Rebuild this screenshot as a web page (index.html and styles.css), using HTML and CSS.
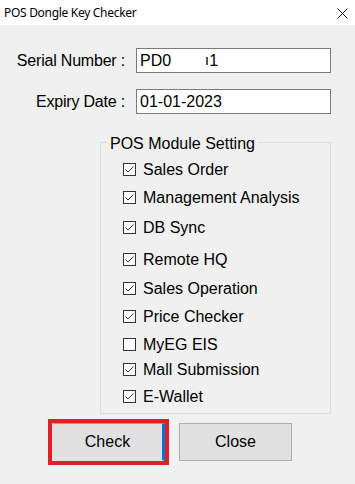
FILE: index.html
```html
<!DOCTYPE html>
<html>
<head>
<meta charset="utf-8">
<link rel="stylesheet" href="styles.css">
</head>
<body>
<div class="window">
  <div class="titlebar">
    <span class="title">POS Dongle Key Checker</span>
    <svg class="close-x" width="11" height="11" viewBox="0 0 11 11"><path d="M0.5 0.5 L10.5 10.5 M10.5 0.5 L0.5 10.5" stroke="#111" stroke-width="1" fill="none"/></svg>
  </div>
  <div class="form">
    <div class="label">Serial Number :</div>
    <div class="field">PD0<span class="gap"></span><span class="remnant"></span>1</div>
    <div class="label">Expiry Date :</div>
    <div class="field">01-01-2023</div>
  </div>
  <fieldset class="group">
    <legend class="legend">POS Module Setting</legend>
    <div class="list">
      <div class="item"><svg class="cb" width="13" height="13" viewBox="0 0 13 13"><rect x="0.5" y="0.5" width="12" height="12" fill="#fff" stroke="#333"/><polyline points="2.5,6.5 5,9 10.5,3.5" fill="none" stroke="#333" stroke-width="1"/></svg><span>Sales Order</span></div>
      <div class="item sp3"><svg class="cb" width="13" height="13" viewBox="0 0 13 13"><rect x="0.5" y="0.5" width="12" height="12" fill="#fff" stroke="#333"/><polyline points="2.5,6.5 5,9 10.5,3.5" fill="none" stroke="#333" stroke-width="1"/></svg><span>Management Analysis</span></div>
      <div class="item sp5"><svg class="cb" width="13" height="13" viewBox="0 0 13 13"><rect x="0.5" y="0.5" width="12" height="12" fill="#fff" stroke="#333"/><polyline points="2.5,6.5 5,9 10.5,3.5" fill="none" stroke="#333" stroke-width="1"/></svg><span>DB Sync</span></div>
      <div class="item sp7"><svg class="cb" width="13" height="13" viewBox="0 0 13 13"><rect x="0.5" y="0.5" width="12" height="12" fill="#fff" stroke="#333"/><polyline points="2.5,6.5 5,9 10.5,3.5" fill="none" stroke="#333" stroke-width="1"/></svg><span>Remote HQ</span></div>
      <div class="item sp4"><svg class="cb" width="13" height="13" viewBox="0 0 13 13"><rect x="0.5" y="0.5" width="12" height="12" fill="#fff" stroke="#333"/><polyline points="2.5,6.5 5,9 10.5,3.5" fill="none" stroke="#333" stroke-width="1"/></svg><span>Sales Operation</span></div>
      <div class="item sp3"><svg class="cb" width="13" height="13" viewBox="0 0 13 13"><rect x="0.5" y="0.5" width="12" height="12" fill="#fff" stroke="#333"/><polyline points="2.5,6.5 5,9 10.5,3.5" fill="none" stroke="#333" stroke-width="1"/></svg><span>Price Checker</span></div>
      <div class="item sp3"><svg class="cb" width="13" height="13" viewBox="0 0 13 13"><rect x="0.5" y="0.5" width="12" height="12" fill="#fff" stroke="#333"/></svg><span>MyEG EIS</span></div>
      <div class="item sp0"><svg class="cb" width="13" height="13" viewBox="0 0 13 13"><rect x="0.5" y="0.5" width="12" height="12" fill="#fff" stroke="#333"/><polyline points="2.5,6.5 5,9 10.5,3.5" fill="none" stroke="#333" stroke-width="1"/></svg><span>Mall Submission</span></div>
      <div class="item sp2"><svg class="cb" width="13" height="13" viewBox="0 0 13 13"><rect x="0.5" y="0.5" width="12" height="12" fill="#fff" stroke="#333"/><polyline points="2.5,6.5 5,9 10.5,3.5" fill="none" stroke="#333" stroke-width="1"/></svg><span>E-Wallet</span></div>
    </div>
  </fieldset>
  <div class="buttons">
    <div class="btn btn-default">Check</div>
    <div class="btn">Close</div>
  </div>
</div>
</body>
</html>
```
FILE: styles.css
```css
html, body {
  margin: 0;
  padding: 0;
  background: #f0f0f0;
}
.window {
  width: 355px;
  height: 484px;
  overflow: hidden;
  background: #f0f0f0;
  font-family: "Liberation Sans", Arial, sans-serif;
  font-size: 16px;
  color: #000;
}
.titlebar {
  height: 25px;
  background: #fff;
  display: flex;
  align-items: center;
  justify-content: space-between;
  padding: 0 7px 0 4px;
  box-sizing: border-box;
}
.title {
  font-family: "Noto Sans", "Open Sans", sans-serif;
  font-size: 12px;
  letter-spacing: -0.3px;
  color: #000;
}
.close-x {
  display: block;
  margin-top: 2px;
}
.form {
  display: grid;
  grid-template-columns: 125px 195px;
  column-gap: 11px;
  row-gap: 16px;
  padding-top: 23px;
}
.label {
  text-align: right;
  height: 25px;
  line-height: 25px;
  white-space: nowrap;
  letter-spacing: -0.2px;
}
.field {
  height: 25px;
  line-height: 23px;
  box-sizing: border-box;
  border: 1px solid #7a7a7a;
  background: #fff;
  padding: 0 3px;
  white-space: nowrap;
}
.gap {
  display: inline-block;
  width: 35px;
}
.remnant {
  display: inline-block;
  width: 2px;
  height: 8px;
  background: #555;
  margin-right: 1px;
  vertical-align: 1px;
}
.group {
  margin: 17px 0 0 100px;
  width: 231px;
  box-sizing: border-box;
  border: 1px solid #dcdcdc;
  padding: 0;
  min-width: 0;
}
.legend {
  margin-left: 6px;
  padding: 4px 3px 0 3px;
  line-height: 18px;
}
.list {
  padding: 4px 0 4px 22px;
}
.item {
  height: 25px;
  display: flex;
  align-items: center;
  white-space: nowrap;
}
.sp0 { margin-top: 0; }
.sp2 { margin-top: 2px; }
.sp3 { margin-top: 3px; }
.sp4 { margin-top: 4px; }
.sp5 { margin-top: 5px; }
.sp7 { margin-top: 7px; }
.cb {
  display: block;
  flex: none;
  margin-right: 7px;
}
.buttons {
  display: flex;
  gap: 14px;
  margin: 9px 0 0 52px;
}
.btn {
  width: 113px;
  height: 38px;
  box-sizing: border-box;
  border: 1px solid #adadad;
  background: #e1e1e1;
  display: flex;
  align-items: center;
  justify-content: center;
}
.btn-default {
  border-color: #66aee8 #0078d7 #e1e1e1 #e1e1e1;
  border-right-width: 3px;
  outline: 4px solid #e41e26;
  outline-offset: 0px;
}
```
